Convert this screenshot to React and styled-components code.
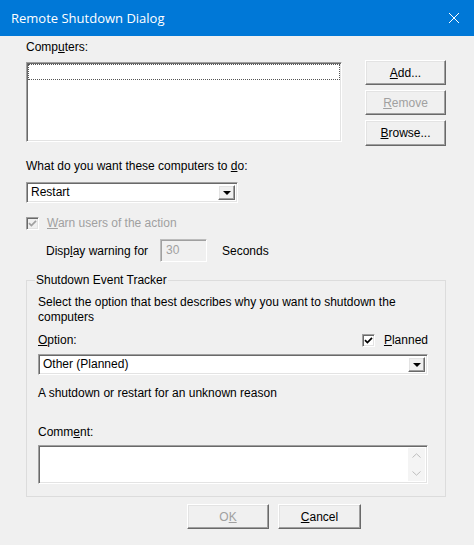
import React from "react";
import styled, { createGlobalStyle, css } from "styled-components";

const GlobalStyle = createGlobalStyle`
  html, body {
    margin: 0;
    padding: 0;
    background: #f0f0f0;
  }
  body {
    font-family: "Liberation Sans", Arial, sans-serif;
    font-size: 12px;
    color: #000;
  }
  * { box-sizing: border-box; }
`;

// classic 3D borders
const sunken = css`
  border: 1px solid;
  border-color: #a0a0a0 #ffffff #ffffff #a0a0a0;
  box-shadow: inset 1px 1px 0 #696969, inset -1px -1px 0 #e3e3e3;
`;

const raised = css`
  border: 1px solid;
  border-color: #ffffff #696969 #696969 #ffffff;
  box-shadow: inset -1px -1px 0 #a0a0a0, inset 1px 1px 0 #e3e3e3;
`;

const Window = styled.div`
  width: 474px;
  height: 545px;
  display: flex;
  flex-direction: column;
  background: #f0f0f0;
  overflow: hidden;
`;

const TitleBar = styled.div`
  flex: none;
  height: 36px;
  background: #0078d7;
  color: #ffffff;
  display: flex;
  align-items: center;
  justify-content: space-between;
  padding: 0 15px 0 11px;
  font-family: "Open Sans", "Liberation Sans", sans-serif;
  font-size: 13px;
`;

const Body = styled.div`
  display: flex;
  flex-direction: column;
  padding: 4px 28px 0 26px;
`;

const Label = styled.div`
  line-height: 14px;
  height: 14px;
  margin-top: ${(p) => p.$top || 0}px;
  color: ${(p) => (p.$disabled ? "#a0a0a0" : "#000")};
  white-space: nowrap;
`;

const Key = styled.span`
  text-decoration: underline;
  text-underline-offset: 1px;
`;

const ComputersRow = styled.div`
  display: flex;
  justify-content: space-between;
  margin-top: 6px;
`;

const ListBox = styled.div`
  ${sunken};
  width: 316px;
  height: 80px;
  margin-top: 2px;
  background: #ffffff;
  padding: 1px;
`;

const FocusRow = styled.div`
  height: 16px;
  border: 1px dotted #555;
`;

const ButtonStack = styled.div`
  display: flex;
  flex-direction: column;
  gap: 5px;
`;

const Button = styled.div`
  ${raised};
  width: ${(p) => p.$w || 81}px;
  height: 25px;
  background: #f0f0f0;
  display: flex;
  align-items: center;
  justify-content: center;
  color: ${(p) => (p.$disabled ? "#a0a0a0" : "#000")};
`;

const Combo = styled.div`
  ${sunken};
  width: ${(p) => p.$w}px;
  height: 21px;
  margin-top: ${(p) => p.$top || 0}px;
  background: #ffffff;
  display: flex;
  padding: 2px;
`;

const ComboText = styled.div`
  flex: 1;
  padding-left: 2px;
  line-height: 15px;
`;

const ComboButton = styled.div`
  ${raised};
  width: 17px;
  height: 15px;
  background: #f0f0f0;
  display: flex;
  align-items: center;
  justify-content: center;
`;

const Arrow = styled.div`
  width: 0;
  height: 0;
  border-left: 4px solid transparent;
  border-right: 4px solid transparent;
  border-top: 4px solid #000;
`;

const CheckRow = styled.div`
  display: flex;
  align-items: center;
  gap: ${(p) => p.$gap || 8}px;
  margin-top: ${(p) => p.$top || 0}px;
  height: 14px;
`;

const Box = styled.div`
  ${sunken};
  width: 13px;
  height: 13px;
  flex: none;
  background: ${(p) => (p.$disabled ? "#f0f0f0" : "#ffffff")};
  display: flex;
  align-items: center;
  justify-content: center;
`;

const WarnRow = styled.div`
  display: flex;
  align-items: center;
  margin-top: 9px;
  padding-left: 20px;
  height: 23px;
`;

const WarnLabel = styled.div`
  width: 114px;
  white-space: nowrap;
`;

const NumberBox = styled.div`
  ${sunken};
  width: 47px;
  height: 23px;
  padding-left: 5px;
  line-height: 21px;
  color: #a0a0a0;
  border-color: #bcbcbc #ffffff #ffffff #bcbcbc;
  box-shadow: inset 1px 1px 0 #a0a0a0;
`;

const Unit = styled.div`
  margin-left: 15px;
`;

const Group = styled.fieldset`
  margin: 11px 0 0;
  padding: 0 17px 12px 11px;
  border: 1px solid #dcdcdc;
  min-width: 0;
`;

const GroupTitle = styled.legend`
  padding: 0 1px;
  margin-left: -3px;
  line-height: 14px;
`;

const Description = styled.div`
  margin-top: 8px;
  line-height: 15px;
`;

const OptionRow = styled.div`
  display: flex;
  justify-content: space-between;
  align-items: center;
  margin-top: 8px;
  height: 14px;
`;

const CommentBox = styled.div`
  ${sunken};
  width: 390px;
  height: 39px;
  margin-top: 6px;
  background: #ffffff;
  display: flex;
  justify-content: flex-end;
  padding: 2px;
`;

const ScrollBar = styled.div`
  width: 17px;
  background: #f4f4f4;
  display: flex;
  flex-direction: column;
  justify-content: space-between;
  align-items: center;
  padding: 5px 0;
`;

const Footer = styled.div`
  display: flex;
  gap: 9px;
  margin-top: 7px;
  padding-left: 161px;
`;

function Check({ disabled }) {
  return (
    <Box $disabled={disabled}>
      <svg width="9" height="9" viewBox="0 0 9 9">
        <path
          d="M1 4.2 L3.4 6.6 L8 1.8"
          fill="none"
          stroke={disabled ? "#a0a0a0" : "#000"}
          strokeWidth="1.7"
        />
      </svg>
    </Box>
  );
}

function Chevron({ up }) {
  return (
    <svg width="9" height="5" viewBox="0 0 9 5">
      <path
        d={up ? "M0.5 4.5 L4.5 0.8 L8.5 4.5" : "M0.5 0.5 L4.5 4.2 L8.5 0.5"}
        fill="none"
        stroke="#bdbdbd"
        strokeWidth="1"
      />
    </svg>
  );
}

function App() {
  return (
    <>
      <GlobalStyle />
      <Window>
        <TitleBar>
          <span>Remote Shutdown Dialog</span>
          <svg width="10" height="10" viewBox="0 0 10 10">
            <path d="M0 0 L10 10 M10 0 L0 10" stroke="#ffffff" strokeWidth="1" />
          </svg>
        </TitleBar>

        <Body>
          <Label>
            Comp<Key>u</Key>ters:
          </Label>
          <ComputersRow>
            <ListBox>
              <FocusRow />
            </ListBox>
            <ButtonStack>
              <Button>
                <span><Key>A</Key>dd...</span>
              </Button>
              <Button $disabled>
                <span><Key>R</Key>emove</span>
              </Button>
              <Button style={{ height: 26 }}>
                <span><Key>B</Key>rowse...</span>
              </Button>
            </ButtonStack>
          </ComputersRow>

          <Label $top={13}>
            What do you want these computers to <Key>d</Key>o:
          </Label>
          <Combo $w={212} $top={9}>
            <ComboText>Restart</ComboText>
            <ComboButton><Arrow /></ComboButton>
          </Combo>

          <CheckRow $top={13}>
            <Check disabled />
            <Label $disabled>
              <Key>W</Key>arn users of the action
            </Label>
          </CheckRow>

          <WarnRow>
            <WarnLabel>
              Disp<Key>l</Key>ay warning for
            </WarnLabel>
            <NumberBox>30</NumberBox>
            <Unit>Seconds</Unit>
          </WarnRow>

          <Group>
            <GroupTitle>Shutdown Event Tracker</GroupTitle>
            <Description>
              Select the option that best describes why you want to shutdown the computers
            </Description>
            <OptionRow>
              <Label>
                <Key>O</Key>ption:
              </Label>
              <CheckRow $gap={9}>
                <Check />
                <Label>
                  <Key>P</Key>lanned
                </Label>
              </CheckRow>
            </OptionRow>
            <Combo $w={390} $top={7}>
              <ComboText>Other (Planned)</ComboText>
              <ComboButton><Arrow /></ComboButton>
            </Combo>
            <Label $top={11}>A shutdown or restart for an unknown reason</Label>
            <Label $top={25}>
              Comm<Key>e</Key>nt:
            </Label>
            <CommentBox>
              <ScrollBar>
                <Chevron up />
                <Chevron />
              </ScrollBar>
            </CommentBox>
          </Group>

          <Footer>
            <Button $w={82} $disabled>
              <span>O<Key>K</Key></span>
            </Button>
            <Button $w={83}>
              <span><Key>C</Key>ancel</span>
            </Button>
          </Footer>
        </Body>
      </Window>
    </>
  );
}

export default App;
